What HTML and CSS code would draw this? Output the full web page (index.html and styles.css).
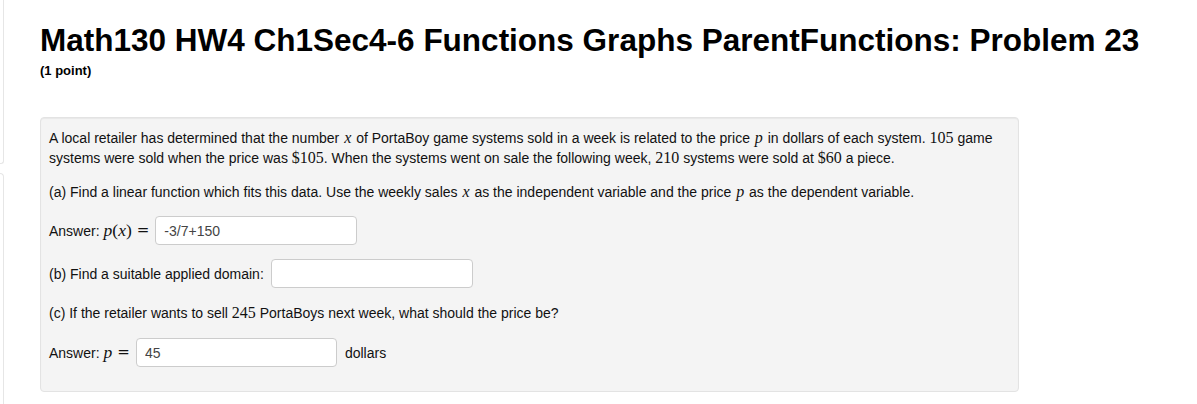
FILE: index.html
```html
<!DOCTYPE html>
<html>
<head>
<meta charset="utf-8">
<link rel="stylesheet" href="styles.css">
</head>
<body>
<div class="page">
  <div class="rail">
    <div class="rail-top"></div>
    <div class="rail-bottom"></div>
  </div>
  <main class="main">
    <h1 class="title">Math130 HW4 Ch1Sec4-6 Functions Graphs ParentFunctions: Problem 23</h1>
    <div class="points">(1 point)</div>
    <div class="well">
      <p class="para">A local retailer has determined that the number <span class="mi">x</span> of PortaBoy game systems sold in a week is related to the price <span class="mi">p</span> in dollars of each system. <span class="mn">105</span> game<br>systems were sold when the price was <span class="mn">$105</span>. When the systems went on sale the following week, <span class="mn">210</span> systems were sold at <span class="mn">$60</span> a piece.</p>
      <p class="line la">(a) Find a linear function which fits this data. Use the weekly sales <span class="mi">x</span> as the independent variable and the price <span class="mi">p</span> as the dependent variable.</p>
      <div class="row r1">
        <span class="label">Answer:</span>
        <span class="mi big">p</span><span class="mn big">(</span><span class="mi big">x</span><span class="mn big">)</span><span class="eq">=</span>
        <input class="field" type="text" value="-3/7+150">
      </div>
      <div class="row r2">
        <span>(b) Find a suitable applied domain:</span>
        <input class="field" type="text" value="">
      </div>
      <p class="line lc">(c) If the retailer wants to sell <span class="mn">245</span> PortaBoys next week, what should the price be?</p>
      <div class="row r3">
        <span class="label">Answer:</span>
        <span class="mi big">p</span><span class="eq">=</span>
        <input class="field f3" type="text" value="45">
        <span class="unit">dollars</span>
      </div>
    </div>
  </main>
</div>
</body>
</html>
```

FILE: styles.css
```css
html, body {
  margin: 0;
  padding: 0;
  background: #ffffff;
}

body {
  font-family: "Liberation Sans", Arial, Helvetica, sans-serif;
  color: #000;
}

.page {
  display: flex;
  min-height: 404px;
}

.rail {
  width: 4px;
  display: flex;
  flex-direction: column;
  gap: 9px;
}

.rail-top {
  height: 163px;
  border-right: 1px solid #e6e6e6;
  border-bottom: 1px solid #e6e6e6;
  border-bottom-right-radius: 3px;
}

.rail-bottom {
  flex: 1;
  border-right: 1px solid #e6e6e6;
  border-top: 1px solid #e6e6e6;
  border-top-right-radius: 4px;
}

.main {
  padding-left: 36px;
  width: 979px;
}

.title {
  margin: 23px 0 0 0;
  font-size: 31.5px;
  line-height: 34px;
  font-weight: bold;
  white-space: nowrap;
}

.points {
  margin-top: 7px;
  font-size: 13px;
  font-weight: bold;
  line-height: 14px;
}

.well {
  margin-top: 39px;
  background: #f4f4f4;
  border: 1px solid #e3e3e3;
  border-radius: 4px;
  box-shadow: inset 0 1px 1px rgba(0, 0, 0, 0.05);
  padding: 10px 9px 24px 8px;
  font-size: 14px;
  line-height: 20px;
  color: #111;
}

.para {
  margin: 0;
  height: 40px;
  white-space: nowrap;
}

.line {
  margin: 0;
  height: 20px;
  white-space: nowrap;
}

.la { margin-top: 14px; }
.lc { margin-top: 15px; }

.row {
  display: flex;
  align-items: center;
  height: 29px;
  white-space: nowrap;
}

.r1 { margin-top: 14px; }
.r2 { margin-top: 14px; gap: 7px; }
.r3 { margin-top: 15px; }

.label {
  margin-right: 4px;
}

.mi {
  font-family: "Liberation Serif", "Times New Roman", serif;
  font-style: italic;
  font-size: 16px;
  line-height: 1;
  padding: 0 1px;
}

.mn {
  font-family: "Liberation Serif", "Times New Roman", serif;
  font-size: 16px;
  line-height: 1;
}

.big {
  font-size: 17.5px;
  padding: 0;
}

.eq {
  font-family: "DejaVu Serif", serif;
  font-size: 15px;
  line-height: 1;
  margin: 0 6px 0 5px;
}

.field {
  box-sizing: border-box;
  width: 202px;
  height: 29px;
  border: 1px solid #cccccc;
  border-radius: 4px;
  background: #ffffff;
  padding: 0 8px;
  font-family: "Liberation Sans", Arial, sans-serif;
  font-size: 14px;
  color: #444;
  margin: 0;
}

.f3 { width: 201px; }

.unit {
  margin-left: 8px;
}
```
